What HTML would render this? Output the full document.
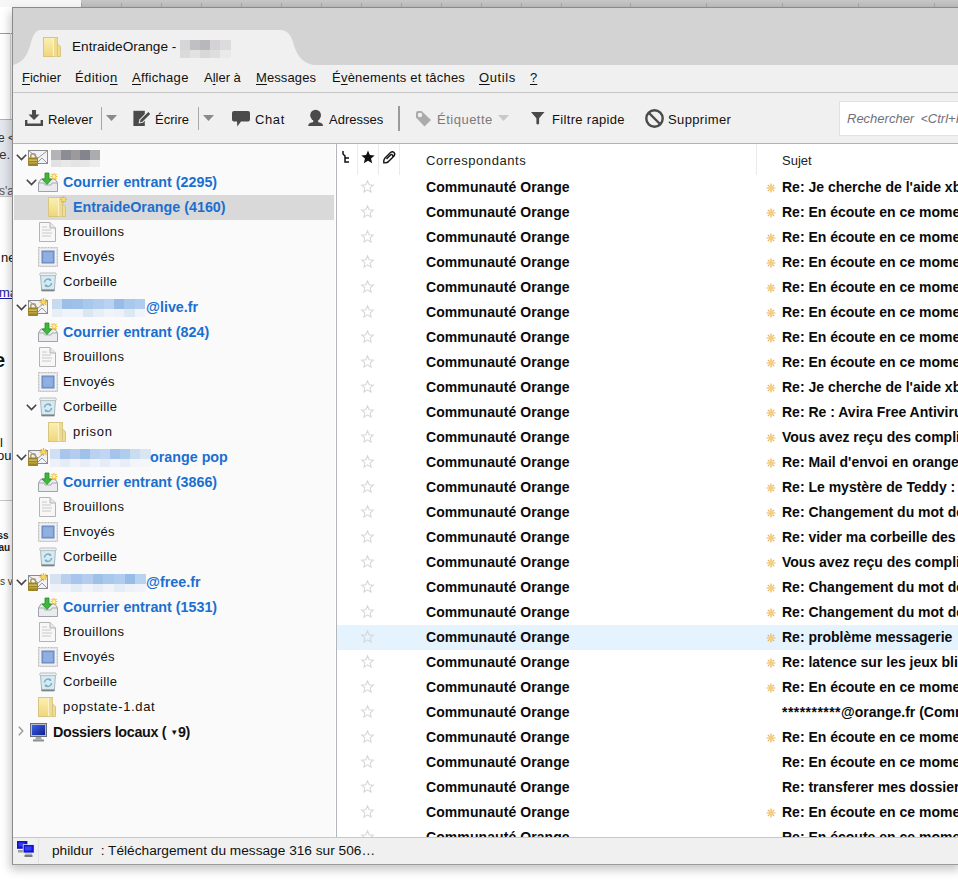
<!DOCTYPE html><html><head><meta charset="utf-8"><style>
*{margin:0;padding:0;box-sizing:border-box}
html,body{width:958px;height:883px;overflow:hidden;background:#fff;font-family:"Liberation Sans",sans-serif;color:#000}
.a{position:absolute;white-space:nowrap}
.r{position:absolute}
.t13{font-size:13px;line-height:16px}
.b14{font-size:14.3px;font-weight:bold;line-height:16px}
.u{text-decoration:underline;text-underline-offset:2px}
.blue{color:#1a6fd0}
svg{position:absolute;overflow:visible}
</style></head><body>
<div class="r" style="left:0;top:0;width:81px;height:7px;background:#f6f6f6"></div>
<div class="r" style="left:81px;top:0;width:877px;height:7px;background:linear-gradient(#c6c6c6,#bbbbbb)"></div>
<div class="r" style="left:81px;top:3px;width:1px;height:4px;background:#a4a4a4"></div>
<div class="r" style="left:121px;top:3px;width:1px;height:4px;background:#a4a4a4"></div>
<div class="r" style="left:161px;top:3px;width:1px;height:4px;background:#a4a4a4"></div>
<div class="r" style="left:201px;top:3px;width:1px;height:4px;background:#a4a4a4"></div>
<div class="r" style="left:241px;top:3px;width:1px;height:4px;background:#a4a4a4"></div>
<div class="r" style="left:281px;top:3px;width:1px;height:4px;background:#a4a4a4"></div>
<div class="r" style="left:321px;top:3px;width:1px;height:4px;background:#a4a4a4"></div>
<div class="r" style="left:361px;top:3px;width:1px;height:4px;background:#a4a4a4"></div>
<div class="r" style="left:401px;top:3px;width:1px;height:4px;background:#a4a4a4"></div>
<div class="r" style="left:441px;top:3px;width:1px;height:4px;background:#a4a4a4"></div>
<div class="r" style="left:481px;top:3px;width:1px;height:4px;background:#a4a4a4"></div>
<div class="r" style="left:521px;top:3px;width:1px;height:4px;background:#a4a4a4"></div>
<div class="r" style="left:561px;top:3px;width:1px;height:4px;background:#a4a4a4"></div>
<div class="r" style="left:630px;top:3px;width:1px;height:4px;background:#a4a4a4"></div>
<div class="r" style="left:706px;top:3px;width:1px;height:4px;background:#a4a4a4"></div>
<div class="r" style="left:782px;top:3px;width:1px;height:4px;background:#a4a4a4"></div>
<div class="r" style="left:858px;top:3px;width:1px;height:4px;background:#a4a4a4"></div>
<div class="r" style="left:934px;top:3px;width:1px;height:4px;background:#a4a4a4"></div>
<div class="r" style="left:0;top:33px;width:12px;height:1px;background:#9a9a9a"></div>
<div class="r" style="left:10px;top:33px;width:1px;height:87px;background:#d8d8d8"></div>
<div class="r" style="left:0;top:119px;width:12px;height:1px;background:#b0b0b0"></div>
<div class="r" style="left:0;top:120px;width:12px;height:76px;background:#e4e8ee"></div>
<div class="r" style="left:0;top:500px;width:12px;height:1px;background:#c8c8c8"></div>
<div class="r" style="left:0;top:196px;width:12px;height:1px;background:#c4c4c4"></div>
<div class="a" style="left:-2px;top:131px;font-size:12px;line-height:14px;color:#333;font-weight:normal;">e &lt;</div>
<div class="a" style="left:-8px;top:147px;font-size:13px;line-height:15px;color:#333;font-weight:normal;">ge.</div>
<div class="a" style="left:-1px;top:184px;font-size:12px;line-height:14px;color:#555;font-weight:normal;">s'a</div>
<div class="a" style="left:1px;top:250px;font-size:13px;line-height:15px;color:#111;font-weight:normal;">ne</div>
<div class="a" style="left:-1px;top:285px;font-size:13px;line-height:15px;color:#1a1aa0;font-weight:normal;text-decoration:underline;">ma</div>
<div class="a" style="left:-6px;top:349px;font-size:20px;line-height:22px;color:#111;font-weight:bold;">e</div>
<div class="a" style="left:-10px;top:435px;font-size:13px;line-height:15px;color:#111;font-weight:normal;">ail</div>
<div class="a" style="left:-3px;top:448px;font-size:13px;line-height:15px;color:#111;font-weight:normal;">ou</div>
<div class="a" style="left:-8px;top:530px;font-size:10px;line-height:12px;color:#222;font-weight:bold;">ess</div>
<div class="a" style="left:-7px;top:542px;font-size:10px;line-height:12px;color:#222;font-weight:bold;">eau</div>
<div class="a" style="left:0px;top:576px;font-size:10px;line-height:12px;color:#333;font-weight:normal;">s v</div>
<div class="r" style="left:12px;top:7px;width:950px;height:858px;background:#d3d3d3;border-left:1px solid #8a8a8a;border-top:1px solid #8a8a8a;border-bottom:1px solid #9a9a9a;box-shadow:-2px 5px 9px rgba(0,0,0,0.22)"></div>
<svg style="left:0;top:0" width="330" height="70"><path d="M13 65 C22 63 27 56 30 46 C33 35 35 30 41 30 L280 30 C288 30 291 36 293 42 C296 52 300 63 314 65 Z" fill="#f0f0f0"/></svg>
<div class="r" style="left:13px;top:65px;width:945px;height:27px;background:#f0f0f0"></div>
<div class="r" style="left:13px;top:92px;width:945px;height:1px;background:#c6c6c6"></div>
<div class="r" style="left:13px;top:93px;width:945px;height:50px;background:#f0f0f0"></div>
<div class="r" style="left:13px;top:143px;width:945px;height:1px;background:#b4b4b4"></div>
<div class="r" style="left:13px;top:144px;width:322px;height:693px;background:#fafafa"></div>
<div class="r" style="left:335px;top:144px;width:1px;height:693px;background:#fff"></div>
<div class="r" style="left:336px;top:144px;width:1px;height:693px;background:#b3b7bb"></div>
<div class="r" style="left:337px;top:144px;width:621px;height:693px;background:#fff"></div>
<div class="r" style="left:13px;top:837px;width:945px;height:1px;background:#c8c8c8"></div>
<div class="r" style="left:13px;top:838px;width:945px;height:26px;background:#f0f0f0"></div>
<div class="r" style="left:38px;top:838px;width:1px;height:26px;background:#e2e2e2"></div>
<svg style="left:43px;top:37px" width="19" height="20" viewBox="0 0 19 20">
<defs><linearGradient id="fg43_37" x1="0" y1="0" x2="0" y2="1"><stop offset="0" stop-color="#faf0b4"/><stop offset="1" stop-color="#f0d67a"/></linearGradient></defs>
<rect x="0.5" y="0.5" width="14" height="19" fill="url(#fg43_37)" stroke="#d6c682"/>
<rect x="10.6" y="1" width="3.6" height="18.4" fill="#eedb8e"/>
<path d="M10.4 1 V19" stroke="#fffbe0" stroke-width="0.8"/>
<path d="M14.5 7 L17.5 9.5 V19.5 H14.5 Z" fill="#f2dd8a" stroke="#d6c682"/>
</svg>
<div class="a" style="left:72px;top:39px;font-size:13.6px;line-height:16px;color:#111">EntraideOrange -</div>
<div class="r" style="left:180.0px;top:40px;width:10.5px;height:10px;background:#d6d6d8"></div><div class="r" style="left:190.0px;top:40px;width:10.5px;height:10px;background:#c0bfc4"></div><div class="r" style="left:200.0px;top:40px;width:10.5px;height:10px;background:#b9b7ba"></div><div class="r" style="left:210.0px;top:40px;width:10.5px;height:10px;background:#d4d2d6"></div><div class="r" style="left:220.0px;top:40px;width:10.5px;height:10px;background:#dcdcde"></div>
<div class="r" style="left:180.0px;top:50px;width:10.5px;height:8px;background:#dadada"></div><div class="r" style="left:190.0px;top:50px;width:10.5px;height:8px;background:#e2e2e2"></div><div class="r" style="left:200.0px;top:50px;width:10.5px;height:8px;background:#d8d8d8"></div><div class="r" style="left:210.0px;top:50px;width:10.5px;height:8px;background:#dedede"></div><div class="r" style="left:220.0px;top:50px;width:10.5px;height:8px;background:#eaeaea"></div>
<div class="a t13" style="left:22px;top:70px;color:#111;letter-spacing:0px"><span class="u">F</span>ichier</div>
<div class="a t13" style="left:75px;top:70px;color:#111;letter-spacing:0.4px">Éditio<span class="u">n</span></div>
<div class="a t13" style="left:132px;top:70px;color:#111;letter-spacing:0.3px"><span class="u">A</span>ffichage</div>
<div class="a t13" style="left:204px;top:70px;color:#111;letter-spacing:0px">A<span class="u">l</span>ler à</div>
<div class="a t13" style="left:256px;top:70px;color:#111;letter-spacing:0.1px"><span class="u">M</span>essages</div>
<div class="a t13" style="left:332px;top:70px;color:#111;letter-spacing:0.22px">É<span class="u">v</span>ènements et tâches</div>
<div class="a t13" style="left:479px;top:70px;color:#111;letter-spacing:0.6px"><span class="u">O</span>utils</div>
<div class="a t13" style="left:530px;top:70px;color:#111;letter-spacing:0px"><span class="u">?</span></div>
<div class="a t13" style="left:48px;top:112px;color:#111;letter-spacing:0px">Relever</div>
<div class="a t13" style="left:155px;top:112px;color:#111;letter-spacing:0px">Écrire</div>
<div class="a t13" style="left:255px;top:112px;color:#111;letter-spacing:0.6px">Chat</div>
<div class="a t13" style="left:329px;top:112px;color:#111;letter-spacing:0px">Adresses</div>
<div class="a t13" style="left:437px;top:112px;color:#7a7a7a;letter-spacing:0.5px">Étiquette</div>
<div class="a t13" style="left:552px;top:112px;color:#111;letter-spacing:0.33px">Filtre rapide</div>
<div class="a t13" style="left:668px;top:112px;color:#111;letter-spacing:0.37px">Supprimer</div>
<svg style="left:25px;top:110px" width="18" height="16" viewBox="0 0 18 16"><path d="M7 0 H11 V4.5 H14.5 L9 10 L3.5 4.5 H7 Z" fill="#4a4a4a"/><path d="M1.2 10 V14.8 H16.8 V10" fill="none" stroke="#4a4a4a" stroke-width="2.4"/></svg>
<svg style="left:133px;top:110px" width="19" height="17" viewBox="0 0 19 17"><rect x="0.4" y="0.8" width="11.4" height="15.2" fill="#4a4a4a"/><path d="M5.6 13.6 L6.4 9.4 L15.3 0.5 L18.7 3.9 L9.8 12.8 Z" fill="#f0f0f0"/><path d="M6.8 12.4 L7.5 9.8 L15.3 2 L17.2 3.9 L9.4 11.7 Z" fill="#4a4a4a"/></svg>
<svg style="left:232px;top:111px" width="18" height="16" viewBox="0 0 18 16"><path d="M2 0 H16 Q18 0 18 2 V8.5 Q18 10.5 16 10.5 H9 L5.3 15.5 L5 10.5 H2 Q0 10.5 0 8.5 V2 Q0 0 2 0 Z" fill="#4a4a4a"/></svg>
<svg style="left:307px;top:109px" width="17" height="18" viewBox="0 0 17 18"><ellipse cx="8.6" cy="6.3" rx="5.4" ry="5.6" fill="#4a4a4a"/><rect x="6.2" y="10.5" width="5" height="3.5" fill="#4a4a4a"/><path d="M1.2 17 Q1.2 13.6 5.5 13.2 H11.7 Q16 13.6 16 17 Z" fill="#4a4a4a"/></svg>
<svg style="left:415px;top:110px" width="17" height="16" viewBox="0 0 17 16"><path d="M1 3 Q1 1 3 1 H6.5 L16 10 L9.5 16.5 L1 7.5 Z" fill="#ababab"/><circle cx="5" cy="5" r="2.2" fill="#f0f0f0"/></svg>
<svg style="left:531px;top:112px" width="14" height="13" viewBox="0 0 14 13"><path d="M0 0 H13.5 L8.1 6.2 V11.8 Q6.75 13.2 5.4 11.8 V6.2 Z" fill="#4a4a4a"/></svg>
<svg style="left:645px;top:109px" width="19" height="19" viewBox="0 0 19 19"><circle cx="9.5" cy="9.5" r="8.2" fill="none" stroke="#4a4a4a" stroke-width="2.4"/><path d="M4 4 L15 15" stroke="#4a4a4a" stroke-width="2.4"/></svg>
<div class="r" style="left:101px;top:107px;width:1px;height:23px;background:#a8a8a8"></div>
<div class="r" style="left:198px;top:107px;width:1px;height:23px;background:#a8a8a8"></div>
<div class="r" style="left:398px;top:106px;width:2px;height:25px;background:#9a9a9a"></div>
<svg style="left:106px;top:115px" width="11" height="6" viewBox="0 0 11 6"><path d="M0 0 H11 L5.5 6 Z" fill="#8a8a8a"/></svg>
<svg style="left:203px;top:115px" width="11" height="6" viewBox="0 0 11 6"><path d="M0 0 H11 L5.5 6 Z" fill="#8a8a8a"/></svg>
<svg style="left:498px;top:115px" width="11" height="6" viewBox="0 0 11 6"><path d="M0 0 H11 L5.5 6 Z" fill="#c8c8c8"/></svg>
<div class="r" style="left:839px;top:101px;width:130px;height:35px;background:#fff;border:1px solid #e2e2e2"></div>
<div class="a" style="left:847px;top:111px;font-size:13px;line-height:16px;font-style:italic;color:#70707c">Rechercher <span style="margin-left:3px;font-size:12px">&lt;</span>Ctrl+K&gt;</div>
<div class="r" style="left:14px;top:195px;width:320px;height:25px;background:#d9d9d9"></div>
<svg style="left:16px;top:154px" width="11" height="7" viewBox="0 0 11 7"><path d="M0.8 0.8 L5.5 5.6 L10.2 0.8" fill="none" stroke="#444" stroke-width="1.6"/></svg>
<svg style="left:28px;top:150px" width="20" height="17" viewBox="0 0 20 17">
<rect x="0.5" y="0.5" width="19" height="13" fill="#f2f2f4" stroke="#8c8c90"/>
<path d="M1 1 L10 8 L19 1" fill="none" stroke="#9a9aa0"/>
<path d="M9 13 L14 8 L19 13" fill="none" stroke="#9a9aa0"/>
<path d="M2.8 8 v-2 a2.4 2.4 0 0 1 4.8 0 V8" fill="none" stroke="#a89a60" stroke-width="1.4"/>
<rect x="0" y="7.5" width="10" height="8.5" rx="0.8" fill="#9c8424"/>
<rect x="1" y="9.5" width="8" height="1.3" fill="#d8c66a"/>
<rect x="1" y="12.3" width="8" height="1.1" fill="#c8b450"/>
</svg>
<div class="r" style="left:51.0px;top:150px;width:10.3px;height:10px;background:#b4b4b8"></div><div class="r" style="left:60.8px;top:150px;width:10.3px;height:10px;background:#8c8c94"></div><div class="r" style="left:70.6px;top:150px;width:10.3px;height:10px;background:#9c9a9c"></div><div class="r" style="left:80.4px;top:150px;width:10.3px;height:10px;background:#84848c"></div><div class="r" style="left:90.2px;top:150px;width:10.3px;height:10px;background:#acacb0"></div>
<div class="r" style="left:51.0px;top:160px;width:10.3px;height:7px;background:#e2e2e2"></div><div class="r" style="left:60.8px;top:160px;width:10.3px;height:7px;background:#e8e8e8"></div><div class="r" style="left:70.6px;top:160px;width:10.3px;height:7px;background:#e4e4e4"></div><div class="r" style="left:80.4px;top:160px;width:10.3px;height:7px;background:#e6e6e6"></div><div class="r" style="left:90.2px;top:160px;width:10.3px;height:7px;background:#ececec"></div>
<svg style="left:26px;top:179px" width="11" height="7" viewBox="0 0 11 7"><path d="M0.8 0.8 L5.5 5.6 L10.2 0.8" fill="none" stroke="#444" stroke-width="1.6"/></svg>
<svg style="left:38px;top:172px" width="21" height="20" viewBox="0 0 21 20">
<path d="M0.5 11 L3 7 H17 L19.5 11 V19.5 H0.5 Z" fill="#e9ebef" stroke="#9ea3aa"/>
<path d="M0.5 11 H6 L7 13 H13 L14 11 H19.5" fill="none" stroke="#a8adb4"/>
<path d="M7 1 H11 V7 H14 L9 12.5 L4 7 H7 Z" fill="#3db83a" stroke="#2a8a2a" stroke-width="0.8"/>
<g stroke="#f0c040" stroke-width="1.2"><path d="M16 1 V8 M12.5 4.5 H19.5 M13.5 2 L18.5 7 M18.5 2 L13.5 7"/></g>
<circle cx="16" cy="4.5" r="1.5" fill="#fff6b0"/>
</svg>
<div class="a b14 blue" style="left:63px;top:174px">Courrier entrant (2295)</div>
<svg style="left:48px;top:197px" width="19" height="20" viewBox="0 0 19 20">
<defs><linearGradient id="fg48_197" x1="0" y1="0" x2="0" y2="1"><stop offset="0" stop-color="#faf0b4"/><stop offset="1" stop-color="#f0d67a"/></linearGradient></defs>
<rect x="0.5" y="0.5" width="14" height="19" fill="url(#fg48_197)" stroke="#d6c682"/>
<rect x="10.6" y="1" width="3.6" height="18.4" fill="#eedb8e"/>
<path d="M10.4 1 V19" stroke="#fffbe0" stroke-width="0.8"/>
<path d="M14.5 7 L17.5 9.5 V19.5 H14.5 Z" fill="#f2dd8a" stroke="#d6c682"/>
<g stroke="#e8b830" stroke-width="1.2"><path d="M15.5 -1 V6 M12 2.5 H19 M13 0 L18 5 M18 0 L13 5"/></g><circle cx="15.5" cy="2.5" r="1.7" fill="#f8dc70"/></svg>
<div class="a b14 blue" style="left:73px;top:199px">EntraideOrange (4160)</div>
<svg style="left:39px;top:222px" width="17" height="20" viewBox="0 0 17 20">
<path d="M0.5 0.5 H11 L16.5 6 V19.5 H0.5 Z" fill="#f7f7f7" stroke="#b4b4b4"/>
<path d="M11 0.5 V6 H16.5" fill="#e6e6e6" stroke="#b4b4b4"/>
<path d="M3 5 H8 M3 8 H12 M3 11 H13 M3 14 H12" stroke="#c8c8c8"/>
</svg>
<div class="a t13" style="left:63px;top:224px;color:#111;letter-spacing:0.44px">Brouillons</div>
<svg style="left:38px;top:247px" width="20" height="20" viewBox="0 0 20 20">
<rect x="0.5" y="0.5" width="19" height="19" fill="#e4e4e6" stroke="#bdbdc0" stroke-width="1" stroke-dasharray="2 1"/>
<rect x="2" y="2" width="16" height="16" fill="#f2f2f4"/>
<rect x="4" y="4" width="12" height="12" fill="#84a4d8" stroke="#5f82c0"/>
<rect x="5.5" y="5.5" width="9" height="9" fill="#90b0e0"/>
</svg>
<div class="a t13" style="left:63px;top:249px;color:#111;letter-spacing:0.27px">Envoyés</div>
<svg style="left:39px;top:272px" width="18" height="20" viewBox="0 0 18 20">
<path d="M1.5 2.5 H16.5 L15.3 18.8 H2.7 Z" fill="#d6eaf2" stroke="#a6b6be"/>
<rect x="0.8" y="1" width="16.4" height="2.6" rx="0.8" fill="#eef2f4" stroke="#b4bcc0"/>
<rect x="2.6" y="17.4" width="12.8" height="1.8" fill="#7c8286"/>
<path d="M5.5 10.5 a3.4 3.4 0 0 1 5.8 -2.4 M12.5 11 a3.4 3.4 0 0 1 -5.8 2.4" fill="none" stroke="#7aaac4" stroke-width="1.5"/>
<path d="M11.8 6.4 L12.4 9 L9.8 8.6 Z M6.2 15 L5.6 12.4 L8.2 12.8 Z" fill="#7aaac4"/>
</svg>
<div class="a t13" style="left:63px;top:274px;color:#111;letter-spacing:0.34px">Corbeille</div>
<svg style="left:16px;top:304px" width="11" height="7" viewBox="0 0 11 7"><path d="M0.8 0.8 L5.5 5.6 L10.2 0.8" fill="none" stroke="#444" stroke-width="1.6"/></svg>
<svg style="left:28px;top:300px" width="20" height="17" viewBox="0 0 20 17">
<rect x="0.5" y="0.5" width="19" height="13" fill="#f2f2f4" stroke="#8c8c90"/>
<path d="M1 1 L10 8 L19 1" fill="none" stroke="#9a9aa0"/>
<path d="M9 13 L14 8 L19 13" fill="none" stroke="#9a9aa0"/>
<path d="M2.8 8 v-2 a2.4 2.4 0 0 1 4.8 0 V8" fill="none" stroke="#a89a60" stroke-width="1.4"/>
<rect x="0" y="7.5" width="10" height="8.5" rx="0.8" fill="#9c8424"/>
<rect x="1" y="9.5" width="8" height="1.3" fill="#d8c66a"/>
<rect x="1" y="12.3" width="8" height="1.1" fill="#c8b450"/>
<g stroke="#e8b830" stroke-width="1.3"><path d="M15.5 -2 V6 M11.5 2 H19.5 M12.7 -0.8 L18.3 4.8 M18.3 -0.8 L12.7 4.8"/></g><circle cx="15.5" cy="2" r="2" fill="#f6d860"/></svg>
<div class="r" style="left:52.0px;top:299px;width:10.8px;height:10px;background:#c8daf0"></div><div class="r" style="left:62.3px;top:299px;width:10.8px;height:10px;background:#9cbfe8"></div><div class="r" style="left:72.7px;top:299px;width:10.8px;height:10px;background:#9fc1e9"></div><div class="r" style="left:83.0px;top:299px;width:10.8px;height:10px;background:#a8c8ec"></div><div class="r" style="left:93.3px;top:299px;width:10.8px;height:10px;background:#b0cdef"></div><div class="r" style="left:103.7px;top:299px;width:10.8px;height:10px;background:#b8d2f0"></div><div class="r" style="left:114.0px;top:299px;width:10.8px;height:10px;background:#98bce8"></div><div class="r" style="left:124.3px;top:299px;width:10.8px;height:10px;background:#a8c8ec"></div><div class="r" style="left:134.7px;top:299px;width:10.8px;height:10px;background:#b0cdef"></div>
<div class="r" style="left:52.0px;top:309px;width:10.8px;height:8px;background:#e8eef6"></div><div class="r" style="left:62.3px;top:309px;width:10.8px;height:8px;background:#f0f4fa"></div><div class="r" style="left:72.7px;top:309px;width:10.8px;height:8px;background:#f0f4fa"></div><div class="r" style="left:83.0px;top:309px;width:10.8px;height:8px;background:#dce6f2"></div><div class="r" style="left:93.3px;top:309px;width:10.8px;height:8px;background:#e8eef6"></div><div class="r" style="left:103.7px;top:309px;width:10.8px;height:8px;background:#f0f4fa"></div><div class="r" style="left:114.0px;top:309px;width:10.8px;height:8px;background:#eef2f8"></div><div class="r" style="left:124.3px;top:309px;width:10.8px;height:8px;background:#dce8f4"></div><div class="r" style="left:134.7px;top:309px;width:10.8px;height:8px;background:#f0f4fa"></div>
<div class="a b14 blue" style="left:146px;top:299px">@live.fr</div>
<svg style="left:38px;top:322px" width="21" height="20" viewBox="0 0 21 20">
<path d="M0.5 11 L3 7 H17 L19.5 11 V19.5 H0.5 Z" fill="#e9ebef" stroke="#9ea3aa"/>
<path d="M0.5 11 H6 L7 13 H13 L14 11 H19.5" fill="none" stroke="#a8adb4"/>
<path d="M7 1 H11 V7 H14 L9 12.5 L4 7 H7 Z" fill="#3db83a" stroke="#2a8a2a" stroke-width="0.8"/>
<g stroke="#f0c040" stroke-width="1.2"><path d="M16 1 V8 M12.5 4.5 H19.5 M13.5 2 L18.5 7 M18.5 2 L13.5 7"/></g>
<circle cx="16" cy="4.5" r="1.5" fill="#fff6b0"/>
</svg>
<div class="a b14 blue" style="left:63px;top:324px">Courrier entrant (824)</div>
<svg style="left:39px;top:347px" width="17" height="20" viewBox="0 0 17 20">
<path d="M0.5 0.5 H11 L16.5 6 V19.5 H0.5 Z" fill="#f7f7f7" stroke="#b4b4b4"/>
<path d="M11 0.5 V6 H16.5" fill="#e6e6e6" stroke="#b4b4b4"/>
<path d="M3 5 H8 M3 8 H12 M3 11 H13 M3 14 H12" stroke="#c8c8c8"/>
</svg>
<div class="a t13" style="left:63px;top:349px;color:#111;letter-spacing:0.44px">Brouillons</div>
<svg style="left:38px;top:372px" width="20" height="20" viewBox="0 0 20 20">
<rect x="0.5" y="0.5" width="19" height="19" fill="#e4e4e6" stroke="#bdbdc0" stroke-width="1" stroke-dasharray="2 1"/>
<rect x="2" y="2" width="16" height="16" fill="#f2f2f4"/>
<rect x="4" y="4" width="12" height="12" fill="#84a4d8" stroke="#5f82c0"/>
<rect x="5.5" y="5.5" width="9" height="9" fill="#90b0e0"/>
</svg>
<div class="a t13" style="left:63px;top:374px;color:#111;letter-spacing:0.27px">Envoyés</div>
<svg style="left:26px;top:404px" width="11" height="7" viewBox="0 0 11 7"><path d="M0.8 0.8 L5.5 5.6 L10.2 0.8" fill="none" stroke="#444" stroke-width="1.6"/></svg>
<svg style="left:39px;top:397px" width="18" height="20" viewBox="0 0 18 20">
<path d="M1.5 2.5 H16.5 L15.3 18.8 H2.7 Z" fill="#d6eaf2" stroke="#a6b6be"/>
<rect x="0.8" y="1" width="16.4" height="2.6" rx="0.8" fill="#eef2f4" stroke="#b4bcc0"/>
<rect x="2.6" y="17.4" width="12.8" height="1.8" fill="#7c8286"/>
<path d="M5.5 10.5 a3.4 3.4 0 0 1 5.8 -2.4 M12.5 11 a3.4 3.4 0 0 1 -5.8 2.4" fill="none" stroke="#7aaac4" stroke-width="1.5"/>
<path d="M11.8 6.4 L12.4 9 L9.8 8.6 Z M6.2 15 L5.6 12.4 L8.2 12.8 Z" fill="#7aaac4"/>
</svg>
<div class="a t13" style="left:63px;top:399px;color:#111;letter-spacing:0.34px">Corbeille</div>
<svg style="left:48px;top:422px" width="19" height="20" viewBox="0 0 19 20">
<defs><linearGradient id="fg48_422" x1="0" y1="0" x2="0" y2="1"><stop offset="0" stop-color="#faf0b4"/><stop offset="1" stop-color="#f0d67a"/></linearGradient></defs>
<rect x="0.5" y="0.5" width="14" height="19" fill="url(#fg48_422)" stroke="#d6c682"/>
<rect x="10.6" y="1" width="3.6" height="18.4" fill="#eedb8e"/>
<path d="M10.4 1 V19" stroke="#fffbe0" stroke-width="0.8"/>
<path d="M14.5 7 L17.5 9.5 V19.5 H14.5 Z" fill="#f2dd8a" stroke="#d6c682"/>
</svg>
<div class="a t13" style="left:73px;top:424px;color:#111;letter-spacing:0.7px">prison</div>
<svg style="left:16px;top:454px" width="11" height="7" viewBox="0 0 11 7"><path d="M0.8 0.8 L5.5 5.6 L10.2 0.8" fill="none" stroke="#444" stroke-width="1.6"/></svg>
<svg style="left:28px;top:450px" width="20" height="17" viewBox="0 0 20 17">
<rect x="0.5" y="0.5" width="19" height="13" fill="#f2f2f4" stroke="#8c8c90"/>
<path d="M1 1 L10 8 L19 1" fill="none" stroke="#9a9aa0"/>
<path d="M9 13 L14 8 L19 13" fill="none" stroke="#9a9aa0"/>
<path d="M2.8 8 v-2 a2.4 2.4 0 0 1 4.8 0 V8" fill="none" stroke="#a89a60" stroke-width="1.4"/>
<rect x="0" y="7.5" width="10" height="8.5" rx="0.8" fill="#9c8424"/>
<rect x="1" y="9.5" width="8" height="1.3" fill="#d8c66a"/>
<rect x="1" y="12.3" width="8" height="1.1" fill="#c8b450"/>
<g stroke="#e8b830" stroke-width="1.3"><path d="M15.5 -2 V6 M11.5 2 H19.5 M12.7 -0.8 L18.3 4.8 M18.3 -0.8 L12.7 4.8"/></g><circle cx="15.5" cy="2" r="2" fill="#f6d860"/></svg>
<div class="r" style="left:50.0px;top:449px;width:10.5px;height:10px;background:#d0e0f2"></div><div class="r" style="left:60.0px;top:449px;width:10.5px;height:10px;background:#a8c6ec"></div><div class="r" style="left:70.0px;top:449px;width:10.5px;height:10px;background:#b4cdef"></div><div class="r" style="left:80.0px;top:449px;width:10.5px;height:10px;background:#a0c2ea"></div><div class="r" style="left:90.0px;top:449px;width:10.5px;height:10px;background:#b8d2f0"></div><div class="r" style="left:100.0px;top:449px;width:10.5px;height:10px;background:#c0d6f2"></div><div class="r" style="left:110.0px;top:449px;width:10.5px;height:10px;background:#a4c4eb"></div><div class="r" style="left:120.0px;top:449px;width:10.5px;height:10px;background:#b0cdef"></div><div class="r" style="left:130.0px;top:449px;width:10.5px;height:10px;background:#c8dcf2"></div><div class="r" style="left:140.0px;top:449px;width:10.5px;height:10px;background:#d8e6f4"></div>
<div class="r" style="left:50.0px;top:459px;width:10.5px;height:8px;background:#eef2f8"></div><div class="r" style="left:60.0px;top:459px;width:10.5px;height:8px;background:#e4ecf6"></div><div class="r" style="left:70.0px;top:459px;width:10.5px;height:8px;background:#f0f4fa"></div><div class="r" style="left:80.0px;top:459px;width:10.5px;height:8px;background:#e8eef6"></div><div class="r" style="left:90.0px;top:459px;width:10.5px;height:8px;background:#f0f4fa"></div><div class="r" style="left:100.0px;top:459px;width:10.5px;height:8px;background:#e4ecf6"></div><div class="r" style="left:110.0px;top:459px;width:10.5px;height:8px;background:#f0f4fa"></div><div class="r" style="left:120.0px;top:459px;width:10.5px;height:8px;background:#e8eef6"></div><div class="r" style="left:130.0px;top:459px;width:10.5px;height:8px;background:#f2f6fa"></div><div class="r" style="left:140.0px;top:459px;width:10.5px;height:8px;background:#f4f6fa"></div>
<div class="a b14 blue" style="left:150px;top:449px">orange pop</div>
<svg style="left:38px;top:472px" width="21" height="20" viewBox="0 0 21 20">
<path d="M0.5 11 L3 7 H17 L19.5 11 V19.5 H0.5 Z" fill="#e9ebef" stroke="#9ea3aa"/>
<path d="M0.5 11 H6 L7 13 H13 L14 11 H19.5" fill="none" stroke="#a8adb4"/>
<path d="M7 1 H11 V7 H14 L9 12.5 L4 7 H7 Z" fill="#3db83a" stroke="#2a8a2a" stroke-width="0.8"/>
<g stroke="#f0c040" stroke-width="1.2"><path d="M16 1 V8 M12.5 4.5 H19.5 M13.5 2 L18.5 7 M18.5 2 L13.5 7"/></g>
<circle cx="16" cy="4.5" r="1.5" fill="#fff6b0"/>
</svg>
<div class="a b14 blue" style="left:63px;top:474px">Courrier entrant (3866)</div>
<svg style="left:39px;top:497px" width="17" height="20" viewBox="0 0 17 20">
<path d="M0.5 0.5 H11 L16.5 6 V19.5 H0.5 Z" fill="#f7f7f7" stroke="#b4b4b4"/>
<path d="M11 0.5 V6 H16.5" fill="#e6e6e6" stroke="#b4b4b4"/>
<path d="M3 5 H8 M3 8 H12 M3 11 H13 M3 14 H12" stroke="#c8c8c8"/>
</svg>
<div class="a t13" style="left:63px;top:499px;color:#111;letter-spacing:0.44px">Brouillons</div>
<svg style="left:38px;top:522px" width="20" height="20" viewBox="0 0 20 20">
<rect x="0.5" y="0.5" width="19" height="19" fill="#e4e4e6" stroke="#bdbdc0" stroke-width="1" stroke-dasharray="2 1"/>
<rect x="2" y="2" width="16" height="16" fill="#f2f2f4"/>
<rect x="4" y="4" width="12" height="12" fill="#84a4d8" stroke="#5f82c0"/>
<rect x="5.5" y="5.5" width="9" height="9" fill="#90b0e0"/>
</svg>
<div class="a t13" style="left:63px;top:524px;color:#111;letter-spacing:0.27px">Envoyés</div>
<svg style="left:39px;top:547px" width="18" height="20" viewBox="0 0 18 20">
<path d="M1.5 2.5 H16.5 L15.3 18.8 H2.7 Z" fill="#d6eaf2" stroke="#a6b6be"/>
<rect x="0.8" y="1" width="16.4" height="2.6" rx="0.8" fill="#eef2f4" stroke="#b4bcc0"/>
<rect x="2.6" y="17.4" width="12.8" height="1.8" fill="#7c8286"/>
<path d="M5.5 10.5 a3.4 3.4 0 0 1 5.8 -2.4 M12.5 11 a3.4 3.4 0 0 1 -5.8 2.4" fill="none" stroke="#7aaac4" stroke-width="1.5"/>
<path d="M11.8 6.4 L12.4 9 L9.8 8.6 Z M6.2 15 L5.6 12.4 L8.2 12.8 Z" fill="#7aaac4"/>
</svg>
<div class="a t13" style="left:63px;top:549px;color:#111;letter-spacing:0.34px">Corbeille</div>
<svg style="left:16px;top:579px" width="11" height="7" viewBox="0 0 11 7"><path d="M0.8 0.8 L5.5 5.6 L10.2 0.8" fill="none" stroke="#444" stroke-width="1.6"/></svg>
<svg style="left:28px;top:575px" width="20" height="17" viewBox="0 0 20 17">
<rect x="0.5" y="0.5" width="19" height="13" fill="#f2f2f4" stroke="#8c8c90"/>
<path d="M1 1 L10 8 L19 1" fill="none" stroke="#9a9aa0"/>
<path d="M9 13 L14 8 L19 13" fill="none" stroke="#9a9aa0"/>
<path d="M2.8 8 v-2 a2.4 2.4 0 0 1 4.8 0 V8" fill="none" stroke="#a89a60" stroke-width="1.4"/>
<rect x="0" y="7.5" width="10" height="8.5" rx="0.8" fill="#9c8424"/>
<rect x="1" y="9.5" width="8" height="1.3" fill="#d8c66a"/>
<rect x="1" y="12.3" width="8" height="1.1" fill="#c8b450"/>
<g stroke="#e8b830" stroke-width="1.3"><path d="M15.5 -2 V6 M11.5 2 H19.5 M12.7 -0.8 L18.3 4.8 M18.3 -0.8 L12.7 4.8"/></g><circle cx="15.5" cy="2" r="2" fill="#f6d860"/></svg>
<div class="r" style="left:50.0px;top:574px;width:11.2px;height:10px;background:#d4e2f2"></div><div class="r" style="left:60.7px;top:574px;width:11.2px;height:10px;background:#b8d0ee"></div><div class="r" style="left:71.3px;top:574px;width:11.2px;height:10px;background:#a8c6ec"></div><div class="r" style="left:82.0px;top:574px;width:11.2px;height:10px;background:#b4cdef"></div><div class="r" style="left:92.7px;top:574px;width:11.2px;height:10px;background:#9ec0e9"></div><div class="r" style="left:103.3px;top:574px;width:11.2px;height:10px;background:#a8c8ec"></div><div class="r" style="left:114.0px;top:574px;width:11.2px;height:10px;background:#b0cdef"></div><div class="r" style="left:124.7px;top:574px;width:11.2px;height:10px;background:#98bce8"></div><div class="r" style="left:135.3px;top:574px;width:11.2px;height:10px;background:#b8d2f0"></div>
<div class="r" style="left:50.0px;top:584px;width:11.2px;height:8px;background:#eef2f8"></div><div class="r" style="left:60.7px;top:584px;width:11.2px;height:8px;background:#f0f4fa"></div><div class="r" style="left:71.3px;top:584px;width:11.2px;height:8px;background:#e4ecf6"></div><div class="r" style="left:82.0px;top:584px;width:11.2px;height:8px;background:#f0f4fa"></div><div class="r" style="left:92.7px;top:584px;width:11.2px;height:8px;background:#e8eef6"></div><div class="r" style="left:103.3px;top:584px;width:11.2px;height:8px;background:#f0f4fa"></div><div class="r" style="left:114.0px;top:584px;width:11.2px;height:8px;background:#e4ecf6"></div><div class="r" style="left:124.7px;top:584px;width:11.2px;height:8px;background:#eef2f8"></div><div class="r" style="left:135.3px;top:584px;width:11.2px;height:8px;background:#f0f4fa"></div>
<div class="a b14 blue" style="left:146px;top:574px">@free.fr</div>
<svg style="left:38px;top:597px" width="21" height="20" viewBox="0 0 21 20">
<path d="M0.5 11 L3 7 H17 L19.5 11 V19.5 H0.5 Z" fill="#e9ebef" stroke="#9ea3aa"/>
<path d="M0.5 11 H6 L7 13 H13 L14 11 H19.5" fill="none" stroke="#a8adb4"/>
<path d="M7 1 H11 V7 H14 L9 12.5 L4 7 H7 Z" fill="#3db83a" stroke="#2a8a2a" stroke-width="0.8"/>
<g stroke="#f0c040" stroke-width="1.2"><path d="M16 1 V8 M12.5 4.5 H19.5 M13.5 2 L18.5 7 M18.5 2 L13.5 7"/></g>
<circle cx="16" cy="4.5" r="1.5" fill="#fff6b0"/>
</svg>
<div class="a b14 blue" style="left:63px;top:599px">Courrier entrant (1531)</div>
<svg style="left:39px;top:622px" width="17" height="20" viewBox="0 0 17 20">
<path d="M0.5 0.5 H11 L16.5 6 V19.5 H0.5 Z" fill="#f7f7f7" stroke="#b4b4b4"/>
<path d="M11 0.5 V6 H16.5" fill="#e6e6e6" stroke="#b4b4b4"/>
<path d="M3 5 H8 M3 8 H12 M3 11 H13 M3 14 H12" stroke="#c8c8c8"/>
</svg>
<div class="a t13" style="left:63px;top:624px;color:#111;letter-spacing:0.44px">Brouillons</div>
<svg style="left:38px;top:647px" width="20" height="20" viewBox="0 0 20 20">
<rect x="0.5" y="0.5" width="19" height="19" fill="#e4e4e6" stroke="#bdbdc0" stroke-width="1" stroke-dasharray="2 1"/>
<rect x="2" y="2" width="16" height="16" fill="#f2f2f4"/>
<rect x="4" y="4" width="12" height="12" fill="#84a4d8" stroke="#5f82c0"/>
<rect x="5.5" y="5.5" width="9" height="9" fill="#90b0e0"/>
</svg>
<div class="a t13" style="left:63px;top:649px;color:#111;letter-spacing:0.27px">Envoyés</div>
<svg style="left:39px;top:672px" width="18" height="20" viewBox="0 0 18 20">
<path d="M1.5 2.5 H16.5 L15.3 18.8 H2.7 Z" fill="#d6eaf2" stroke="#a6b6be"/>
<rect x="0.8" y="1" width="16.4" height="2.6" rx="0.8" fill="#eef2f4" stroke="#b4bcc0"/>
<rect x="2.6" y="17.4" width="12.8" height="1.8" fill="#7c8286"/>
<path d="M5.5 10.5 a3.4 3.4 0 0 1 5.8 -2.4 M12.5 11 a3.4 3.4 0 0 1 -5.8 2.4" fill="none" stroke="#7aaac4" stroke-width="1.5"/>
<path d="M11.8 6.4 L12.4 9 L9.8 8.6 Z M6.2 15 L5.6 12.4 L8.2 12.8 Z" fill="#7aaac4"/>
</svg>
<div class="a t13" style="left:63px;top:674px;color:#111;letter-spacing:0.34px">Corbeille</div>
<svg style="left:38px;top:697px" width="19" height="20" viewBox="0 0 19 20">
<defs><linearGradient id="fg38_697" x1="0" y1="0" x2="0" y2="1"><stop offset="0" stop-color="#faf0b4"/><stop offset="1" stop-color="#f0d67a"/></linearGradient></defs>
<rect x="0.5" y="0.5" width="14" height="19" fill="url(#fg38_697)" stroke="#d6c682"/>
<rect x="10.6" y="1" width="3.6" height="18.4" fill="#eedb8e"/>
<path d="M10.4 1 V19" stroke="#fffbe0" stroke-width="0.8"/>
<path d="M14.5 7 L17.5 9.5 V19.5 H14.5 Z" fill="#f2dd8a" stroke="#d6c682"/>
</svg>
<div class="a t13" style="left:63px;top:699px;color:#111;letter-spacing:0.66px">popstate-1.dat</div>
<svg style="left:18px;top:726px" width="7" height="11" viewBox="0 0 7 11"><path d="M0.8 0.8 L4.8 5 L0.8 9.2" fill="none" stroke="#9a9a9a" stroke-width="1.4"/></svg>
<svg style="left:29px;top:723px" width="20" height="20" viewBox="0 0 20 20">
<rect x="1.5" y="0.5" width="16" height="13" fill="#b8bcc4" stroke="#6a6e78"/>
<defs><linearGradient id="scr" x1="0" y1="0" x2="1" y2="1"><stop offset="0" stop-color="#3a60f0"/><stop offset="1" stop-color="#10208a"/></linearGradient></defs>
<rect x="3" y="2" width="13" height="10" fill="url(#scr)"/>
<path d="M7 14 H12 L13 16.5 H6 Z" fill="#a8a8a8"/>
<rect x="4" y="16.5" width="11" height="2" fill="#909090"/>
</svg>
<div class="a b14" style="left:53px;top:724px;color:#111;letter-spacing:-0.3px">Dossiers locaux (<span style="font-size:8px;vertical-align:2px;margin:0 0 0 4px">▼</span>9)</div>
<div class="a t13" style="left:426px;top:153px;color:#222;letter-spacing:0.55px">Correspondants</div>
<div class="a t13" style="left:782px;top:153px;color:#222">Sujet</div>
<div class="r" style="left:357px;top:144px;width:1px;height:31px;background:#eaeaea"></div>
<div class="r" style="left:378px;top:144px;width:1px;height:31px;background:#eaeaea"></div>
<div class="r" style="left:399px;top:144px;width:1px;height:31px;background:#eaeaea"></div>
<div class="r" style="left:756px;top:144px;width:1px;height:31px;background:#eaeaea"></div>
<svg style="left:342px;top:151px" width="8" height="12" viewBox="0 0 8 12"><path d="M1 0 V3 L3 5 V11 H7 M3 7 H7" fill="none" stroke="#111" stroke-width="1.5"/></svg>
<svg style="left:361px;top:150px" width="14" height="14" viewBox="0 0 24 24"><path d="M12 1 L15.2 8.6 L23.4 9.3 L17.2 14.7 L19.1 22.8 L12 18.5 L4.9 22.8 L6.8 14.7 L0.6 9.3 L8.8 8.6 Z" fill="#111"/></svg>
<svg style="left:383px;top:151px" width="13" height="13" viewBox="0 0 13 13"><path d="M4.5 11.5 L11 5 Q12.5 3 11 1.5 Q9.5 0 7.5 1.5 L2 7 Q0.5 8.5 0.8 11.8 Q4 12.2 5.5 10.5 L9.5 6.5 Q10.5 5 9.5 4 Q8.5 3 7 4.5 L3.5 8" fill="none" stroke="#111" stroke-width="1.4"/></svg>
<div class="r" style="left:337px;top:175px;width:621px;height:662px;overflow:hidden">
<svg style="left:24px;top:5px" width="13" height="13" viewBox="0 0 24 24"><path d="M12 1.5 L15 8.8 L22.8 9.5 L16.9 14.6 L18.7 22.3 L12 18.3 L5.3 22.3 L7.1 14.6 L1.2 9.5 L9 8.8 Z" fill="none" stroke="#d6d6d6" stroke-width="1.9"/></svg>
<div class="a b14" style="left:89px;top:4px;color:#0a0a0a;font-size:14px;letter-spacing:0.08px">Communauté Orange</div>
<svg style="left:429px;top:8px" width="10" height="10" viewBox="0 0 10 10"><g stroke="#eab35a" stroke-width="1.2"><path d="M5 0.5 V9.5 M0.5 5 H9.5 M1.8 1.8 L8.2 8.2 M8.2 1.8 L1.8 8.2"/></g><circle cx="5" cy="5" r="2.4" fill="#f4cf7c"/></svg>
<div class="a b14" style="left:445px;top:4px;color:#0a0a0a;font-size:14px">Re: Je cherche de l'aide xbox</div>
<svg style="left:24px;top:30px" width="13" height="13" viewBox="0 0 24 24"><path d="M12 1.5 L15 8.8 L22.8 9.5 L16.9 14.6 L18.7 22.3 L12 18.3 L5.3 22.3 L7.1 14.6 L1.2 9.5 L9 8.8 Z" fill="none" stroke="#d6d6d6" stroke-width="1.9"/></svg>
<div class="a b14" style="left:89px;top:29px;color:#0a0a0a;font-size:14px;letter-spacing:0.08px">Communauté Orange</div>
<svg style="left:429px;top:33px" width="10" height="10" viewBox="0 0 10 10"><g stroke="#eab35a" stroke-width="1.2"><path d="M5 0.5 V9.5 M0.5 5 H9.5 M1.8 1.8 L8.2 8.2 M8.2 1.8 L1.8 8.2"/></g><circle cx="5" cy="5" r="2.4" fill="#f4cf7c"/></svg>
<div class="a b14" style="left:445px;top:29px;color:#0a0a0a;font-size:14px">Re: En écoute en ce moment</div>
<svg style="left:24px;top:55px" width="13" height="13" viewBox="0 0 24 24"><path d="M12 1.5 L15 8.8 L22.8 9.5 L16.9 14.6 L18.7 22.3 L12 18.3 L5.3 22.3 L7.1 14.6 L1.2 9.5 L9 8.8 Z" fill="none" stroke="#d6d6d6" stroke-width="1.9"/></svg>
<div class="a b14" style="left:89px;top:54px;color:#0a0a0a;font-size:14px;letter-spacing:0.08px">Communauté Orange</div>
<svg style="left:429px;top:58px" width="10" height="10" viewBox="0 0 10 10"><g stroke="#eab35a" stroke-width="1.2"><path d="M5 0.5 V9.5 M0.5 5 H9.5 M1.8 1.8 L8.2 8.2 M8.2 1.8 L1.8 8.2"/></g><circle cx="5" cy="5" r="2.4" fill="#f4cf7c"/></svg>
<div class="a b14" style="left:445px;top:54px;color:#0a0a0a;font-size:14px">Re: En écoute en ce moment</div>
<svg style="left:24px;top:80px" width="13" height="13" viewBox="0 0 24 24"><path d="M12 1.5 L15 8.8 L22.8 9.5 L16.9 14.6 L18.7 22.3 L12 18.3 L5.3 22.3 L7.1 14.6 L1.2 9.5 L9 8.8 Z" fill="none" stroke="#d6d6d6" stroke-width="1.9"/></svg>
<div class="a b14" style="left:89px;top:79px;color:#0a0a0a;font-size:14px;letter-spacing:0.08px">Communauté Orange</div>
<svg style="left:429px;top:83px" width="10" height="10" viewBox="0 0 10 10"><g stroke="#eab35a" stroke-width="1.2"><path d="M5 0.5 V9.5 M0.5 5 H9.5 M1.8 1.8 L8.2 8.2 M8.2 1.8 L1.8 8.2"/></g><circle cx="5" cy="5" r="2.4" fill="#f4cf7c"/></svg>
<div class="a b14" style="left:445px;top:79px;color:#0a0a0a;font-size:14px">Re: En écoute en ce moment</div>
<svg style="left:24px;top:105px" width="13" height="13" viewBox="0 0 24 24"><path d="M12 1.5 L15 8.8 L22.8 9.5 L16.9 14.6 L18.7 22.3 L12 18.3 L5.3 22.3 L7.1 14.6 L1.2 9.5 L9 8.8 Z" fill="none" stroke="#d6d6d6" stroke-width="1.9"/></svg>
<div class="a b14" style="left:89px;top:104px;color:#0a0a0a;font-size:14px;letter-spacing:0.08px">Communauté Orange</div>
<svg style="left:429px;top:108px" width="10" height="10" viewBox="0 0 10 10"><g stroke="#eab35a" stroke-width="1.2"><path d="M5 0.5 V9.5 M0.5 5 H9.5 M1.8 1.8 L8.2 8.2 M8.2 1.8 L1.8 8.2"/></g><circle cx="5" cy="5" r="2.4" fill="#f4cf7c"/></svg>
<div class="a b14" style="left:445px;top:104px;color:#0a0a0a;font-size:14px">Re: En écoute en ce moment</div>
<svg style="left:24px;top:130px" width="13" height="13" viewBox="0 0 24 24"><path d="M12 1.5 L15 8.8 L22.8 9.5 L16.9 14.6 L18.7 22.3 L12 18.3 L5.3 22.3 L7.1 14.6 L1.2 9.5 L9 8.8 Z" fill="none" stroke="#d6d6d6" stroke-width="1.9"/></svg>
<div class="a b14" style="left:89px;top:129px;color:#0a0a0a;font-size:14px;letter-spacing:0.08px">Communauté Orange</div>
<svg style="left:429px;top:133px" width="10" height="10" viewBox="0 0 10 10"><g stroke="#eab35a" stroke-width="1.2"><path d="M5 0.5 V9.5 M0.5 5 H9.5 M1.8 1.8 L8.2 8.2 M8.2 1.8 L1.8 8.2"/></g><circle cx="5" cy="5" r="2.4" fill="#f4cf7c"/></svg>
<div class="a b14" style="left:445px;top:129px;color:#0a0a0a;font-size:14px">Re: En écoute en ce moment</div>
<svg style="left:24px;top:155px" width="13" height="13" viewBox="0 0 24 24"><path d="M12 1.5 L15 8.8 L22.8 9.5 L16.9 14.6 L18.7 22.3 L12 18.3 L5.3 22.3 L7.1 14.6 L1.2 9.5 L9 8.8 Z" fill="none" stroke="#d6d6d6" stroke-width="1.9"/></svg>
<div class="a b14" style="left:89px;top:154px;color:#0a0a0a;font-size:14px;letter-spacing:0.08px">Communauté Orange</div>
<svg style="left:429px;top:158px" width="10" height="10" viewBox="0 0 10 10"><g stroke="#eab35a" stroke-width="1.2"><path d="M5 0.5 V9.5 M0.5 5 H9.5 M1.8 1.8 L8.2 8.2 M8.2 1.8 L1.8 8.2"/></g><circle cx="5" cy="5" r="2.4" fill="#f4cf7c"/></svg>
<div class="a b14" style="left:445px;top:154px;color:#0a0a0a;font-size:14px">Re: En écoute en ce moment</div>
<svg style="left:24px;top:180px" width="13" height="13" viewBox="0 0 24 24"><path d="M12 1.5 L15 8.8 L22.8 9.5 L16.9 14.6 L18.7 22.3 L12 18.3 L5.3 22.3 L7.1 14.6 L1.2 9.5 L9 8.8 Z" fill="none" stroke="#d6d6d6" stroke-width="1.9"/></svg>
<div class="a b14" style="left:89px;top:179px;color:#0a0a0a;font-size:14px;letter-spacing:0.08px">Communauté Orange</div>
<svg style="left:429px;top:183px" width="10" height="10" viewBox="0 0 10 10"><g stroke="#eab35a" stroke-width="1.2"><path d="M5 0.5 V9.5 M0.5 5 H9.5 M1.8 1.8 L8.2 8.2 M8.2 1.8 L1.8 8.2"/></g><circle cx="5" cy="5" r="2.4" fill="#f4cf7c"/></svg>
<div class="a b14" style="left:445px;top:179px;color:#0a0a0a;font-size:14px">Re: En écoute en ce moment</div>
<svg style="left:24px;top:205px" width="13" height="13" viewBox="0 0 24 24"><path d="M12 1.5 L15 8.8 L22.8 9.5 L16.9 14.6 L18.7 22.3 L12 18.3 L5.3 22.3 L7.1 14.6 L1.2 9.5 L9 8.8 Z" fill="none" stroke="#d6d6d6" stroke-width="1.9"/></svg>
<div class="a b14" style="left:89px;top:204px;color:#0a0a0a;font-size:14px;letter-spacing:0.08px">Communauté Orange</div>
<svg style="left:429px;top:208px" width="10" height="10" viewBox="0 0 10 10"><g stroke="#eab35a" stroke-width="1.2"><path d="M5 0.5 V9.5 M0.5 5 H9.5 M1.8 1.8 L8.2 8.2 M8.2 1.8 L1.8 8.2"/></g><circle cx="5" cy="5" r="2.4" fill="#f4cf7c"/></svg>
<div class="a b14" style="left:445px;top:204px;color:#0a0a0a;font-size:14px">Re: Je cherche de l'aide xbox</div>
<svg style="left:24px;top:230px" width="13" height="13" viewBox="0 0 24 24"><path d="M12 1.5 L15 8.8 L22.8 9.5 L16.9 14.6 L18.7 22.3 L12 18.3 L5.3 22.3 L7.1 14.6 L1.2 9.5 L9 8.8 Z" fill="none" stroke="#d6d6d6" stroke-width="1.9"/></svg>
<div class="a b14" style="left:89px;top:229px;color:#0a0a0a;font-size:14px;letter-spacing:0.08px">Communauté Orange</div>
<svg style="left:429px;top:233px" width="10" height="10" viewBox="0 0 10 10"><g stroke="#eab35a" stroke-width="1.2"><path d="M5 0.5 V9.5 M0.5 5 H9.5 M1.8 1.8 L8.2 8.2 M8.2 1.8 L1.8 8.2"/></g><circle cx="5" cy="5" r="2.4" fill="#f4cf7c"/></svg>
<div class="a b14" style="left:445px;top:229px;color:#0a0a0a;font-size:14px">Re: Re : Avira Free Antivirus</div>
<svg style="left:24px;top:255px" width="13" height="13" viewBox="0 0 24 24"><path d="M12 1.5 L15 8.8 L22.8 9.5 L16.9 14.6 L18.7 22.3 L12 18.3 L5.3 22.3 L7.1 14.6 L1.2 9.5 L9 8.8 Z" fill="none" stroke="#d6d6d6" stroke-width="1.9"/></svg>
<div class="a b14" style="left:89px;top:254px;color:#0a0a0a;font-size:14px;letter-spacing:0.08px">Communauté Orange</div>
<svg style="left:429px;top:258px" width="10" height="10" viewBox="0 0 10 10"><g stroke="#eab35a" stroke-width="1.2"><path d="M5 0.5 V9.5 M0.5 5 H9.5 M1.8 1.8 L8.2 8.2 M8.2 1.8 L1.8 8.2"/></g><circle cx="5" cy="5" r="2.4" fill="#f4cf7c"/></svg>
<div class="a b14" style="left:445px;top:254px;color:#0a0a0a;font-size:14px">Vous avez reçu des compliments</div>
<svg style="left:24px;top:280px" width="13" height="13" viewBox="0 0 24 24"><path d="M12 1.5 L15 8.8 L22.8 9.5 L16.9 14.6 L18.7 22.3 L12 18.3 L5.3 22.3 L7.1 14.6 L1.2 9.5 L9 8.8 Z" fill="none" stroke="#d6d6d6" stroke-width="1.9"/></svg>
<div class="a b14" style="left:89px;top:279px;color:#0a0a0a;font-size:14px;letter-spacing:0.08px">Communauté Orange</div>
<svg style="left:429px;top:283px" width="10" height="10" viewBox="0 0 10 10"><g stroke="#eab35a" stroke-width="1.2"><path d="M5 0.5 V9.5 M0.5 5 H9.5 M1.8 1.8 L8.2 8.2 M8.2 1.8 L1.8 8.2"/></g><circle cx="5" cy="5" r="2.4" fill="#f4cf7c"/></svg>
<div class="a b14" style="left:445px;top:279px;color:#0a0a0a;font-size:14px">Re: Mail d'envoi en orange</div>
<svg style="left:24px;top:305px" width="13" height="13" viewBox="0 0 24 24"><path d="M12 1.5 L15 8.8 L22.8 9.5 L16.9 14.6 L18.7 22.3 L12 18.3 L5.3 22.3 L7.1 14.6 L1.2 9.5 L9 8.8 Z" fill="none" stroke="#d6d6d6" stroke-width="1.9"/></svg>
<div class="a b14" style="left:89px;top:304px;color:#0a0a0a;font-size:14px;letter-spacing:0.08px">Communauté Orange</div>
<svg style="left:429px;top:308px" width="10" height="10" viewBox="0 0 10 10"><g stroke="#eab35a" stroke-width="1.2"><path d="M5 0.5 V9.5 M0.5 5 H9.5 M1.8 1.8 L8.2 8.2 M8.2 1.8 L1.8 8.2"/></g><circle cx="5" cy="5" r="2.4" fill="#f4cf7c"/></svg>
<div class="a b14" style="left:445px;top:304px;color:#0a0a0a;font-size:14px">Re: Le mystère de Teddy : </div>
<svg style="left:24px;top:330px" width="13" height="13" viewBox="0 0 24 24"><path d="M12 1.5 L15 8.8 L22.8 9.5 L16.9 14.6 L18.7 22.3 L12 18.3 L5.3 22.3 L7.1 14.6 L1.2 9.5 L9 8.8 Z" fill="none" stroke="#d6d6d6" stroke-width="1.9"/></svg>
<div class="a b14" style="left:89px;top:329px;color:#0a0a0a;font-size:14px;letter-spacing:0.08px">Communauté Orange</div>
<svg style="left:429px;top:333px" width="10" height="10" viewBox="0 0 10 10"><g stroke="#eab35a" stroke-width="1.2"><path d="M5 0.5 V9.5 M0.5 5 H9.5 M1.8 1.8 L8.2 8.2 M8.2 1.8 L1.8 8.2"/></g><circle cx="5" cy="5" r="2.4" fill="#f4cf7c"/></svg>
<div class="a b14" style="left:445px;top:329px;color:#0a0a0a;font-size:14px">Re: Changement du mot de</div>
<svg style="left:24px;top:355px" width="13" height="13" viewBox="0 0 24 24"><path d="M12 1.5 L15 8.8 L22.8 9.5 L16.9 14.6 L18.7 22.3 L12 18.3 L5.3 22.3 L7.1 14.6 L1.2 9.5 L9 8.8 Z" fill="none" stroke="#d6d6d6" stroke-width="1.9"/></svg>
<div class="a b14" style="left:89px;top:354px;color:#0a0a0a;font-size:14px;letter-spacing:0.08px">Communauté Orange</div>
<svg style="left:429px;top:358px" width="10" height="10" viewBox="0 0 10 10"><g stroke="#eab35a" stroke-width="1.2"><path d="M5 0.5 V9.5 M0.5 5 H9.5 M1.8 1.8 L8.2 8.2 M8.2 1.8 L1.8 8.2"/></g><circle cx="5" cy="5" r="2.4" fill="#f4cf7c"/></svg>
<div class="a b14" style="left:445px;top:354px;color:#0a0a0a;font-size:14px">Re: vider ma corbeille des</div>
<svg style="left:24px;top:380px" width="13" height="13" viewBox="0 0 24 24"><path d="M12 1.5 L15 8.8 L22.8 9.5 L16.9 14.6 L18.7 22.3 L12 18.3 L5.3 22.3 L7.1 14.6 L1.2 9.5 L9 8.8 Z" fill="none" stroke="#d6d6d6" stroke-width="1.9"/></svg>
<div class="a b14" style="left:89px;top:379px;color:#0a0a0a;font-size:14px;letter-spacing:0.08px">Communauté Orange</div>
<svg style="left:429px;top:383px" width="10" height="10" viewBox="0 0 10 10"><g stroke="#eab35a" stroke-width="1.2"><path d="M5 0.5 V9.5 M0.5 5 H9.5 M1.8 1.8 L8.2 8.2 M8.2 1.8 L1.8 8.2"/></g><circle cx="5" cy="5" r="2.4" fill="#f4cf7c"/></svg>
<div class="a b14" style="left:445px;top:379px;color:#0a0a0a;font-size:14px">Vous avez reçu des compliments</div>
<svg style="left:24px;top:405px" width="13" height="13" viewBox="0 0 24 24"><path d="M12 1.5 L15 8.8 L22.8 9.5 L16.9 14.6 L18.7 22.3 L12 18.3 L5.3 22.3 L7.1 14.6 L1.2 9.5 L9 8.8 Z" fill="none" stroke="#d6d6d6" stroke-width="1.9"/></svg>
<div class="a b14" style="left:89px;top:404px;color:#0a0a0a;font-size:14px;letter-spacing:0.08px">Communauté Orange</div>
<svg style="left:429px;top:408px" width="10" height="10" viewBox="0 0 10 10"><g stroke="#eab35a" stroke-width="1.2"><path d="M5 0.5 V9.5 M0.5 5 H9.5 M1.8 1.8 L8.2 8.2 M8.2 1.8 L1.8 8.2"/></g><circle cx="5" cy="5" r="2.4" fill="#f4cf7c"/></svg>
<div class="a b14" style="left:445px;top:404px;color:#0a0a0a;font-size:14px">Re: Changement du mot de</div>
<svg style="left:24px;top:430px" width="13" height="13" viewBox="0 0 24 24"><path d="M12 1.5 L15 8.8 L22.8 9.5 L16.9 14.6 L18.7 22.3 L12 18.3 L5.3 22.3 L7.1 14.6 L1.2 9.5 L9 8.8 Z" fill="none" stroke="#d6d6d6" stroke-width="1.9"/></svg>
<div class="a b14" style="left:89px;top:429px;color:#0a0a0a;font-size:14px;letter-spacing:0.08px">Communauté Orange</div>
<svg style="left:429px;top:433px" width="10" height="10" viewBox="0 0 10 10"><g stroke="#eab35a" stroke-width="1.2"><path d="M5 0.5 V9.5 M0.5 5 H9.5 M1.8 1.8 L8.2 8.2 M8.2 1.8 L1.8 8.2"/></g><circle cx="5" cy="5" r="2.4" fill="#f4cf7c"/></svg>
<div class="a b14" style="left:445px;top:429px;color:#0a0a0a;font-size:14px">Re: Changement du mot de</div>
<div class="r" style="left:0;top:450px;width:621px;height:25px;background:#e5f3fe"></div>
<svg style="left:24px;top:455px" width="13" height="13" viewBox="0 0 24 24"><path d="M12 1.5 L15 8.8 L22.8 9.5 L16.9 14.6 L18.7 22.3 L12 18.3 L5.3 22.3 L7.1 14.6 L1.2 9.5 L9 8.8 Z" fill="none" stroke="#d6d6d6" stroke-width="1.9"/></svg>
<div class="a b14" style="left:89px;top:454px;color:#0a0a0a;font-size:14px;letter-spacing:0.08px">Communauté Orange</div>
<svg style="left:429px;top:458px" width="10" height="10" viewBox="0 0 10 10"><g stroke="#eab35a" stroke-width="1.2"><path d="M5 0.5 V9.5 M0.5 5 H9.5 M1.8 1.8 L8.2 8.2 M8.2 1.8 L1.8 8.2"/></g><circle cx="5" cy="5" r="2.4" fill="#f4cf7c"/></svg>
<div class="a b14" style="left:445px;top:454px;color:#0a0a0a;font-size:14px">Re: problème messagerie </div>
<svg style="left:24px;top:480px" width="13" height="13" viewBox="0 0 24 24"><path d="M12 1.5 L15 8.8 L22.8 9.5 L16.9 14.6 L18.7 22.3 L12 18.3 L5.3 22.3 L7.1 14.6 L1.2 9.5 L9 8.8 Z" fill="none" stroke="#d6d6d6" stroke-width="1.9"/></svg>
<div class="a b14" style="left:89px;top:479px;color:#0a0a0a;font-size:14px;letter-spacing:0.08px">Communauté Orange</div>
<svg style="left:429px;top:483px" width="10" height="10" viewBox="0 0 10 10"><g stroke="#eab35a" stroke-width="1.2"><path d="M5 0.5 V9.5 M0.5 5 H9.5 M1.8 1.8 L8.2 8.2 M8.2 1.8 L1.8 8.2"/></g><circle cx="5" cy="5" r="2.4" fill="#f4cf7c"/></svg>
<div class="a b14" style="left:445px;top:479px;color:#0a0a0a;font-size:14px">Re: latence sur les jeux blizzard</div>
<svg style="left:24px;top:505px" width="13" height="13" viewBox="0 0 24 24"><path d="M12 1.5 L15 8.8 L22.8 9.5 L16.9 14.6 L18.7 22.3 L12 18.3 L5.3 22.3 L7.1 14.6 L1.2 9.5 L9 8.8 Z" fill="none" stroke="#d6d6d6" stroke-width="1.9"/></svg>
<div class="a b14" style="left:89px;top:504px;color:#0a0a0a;font-size:14px;letter-spacing:0.08px">Communauté Orange</div>
<svg style="left:429px;top:508px" width="10" height="10" viewBox="0 0 10 10"><g stroke="#eab35a" stroke-width="1.2"><path d="M5 0.5 V9.5 M0.5 5 H9.5 M1.8 1.8 L8.2 8.2 M8.2 1.8 L1.8 8.2"/></g><circle cx="5" cy="5" r="2.4" fill="#f4cf7c"/></svg>
<div class="a b14" style="left:445px;top:504px;color:#0a0a0a;font-size:14px">Re: En écoute en ce moment</div>
<svg style="left:24px;top:530px" width="13" height="13" viewBox="0 0 24 24"><path d="M12 1.5 L15 8.8 L22.8 9.5 L16.9 14.6 L18.7 22.3 L12 18.3 L5.3 22.3 L7.1 14.6 L1.2 9.5 L9 8.8 Z" fill="none" stroke="#d6d6d6" stroke-width="1.9"/></svg>
<div class="a b14" style="left:89px;top:529px;color:#0a0a0a;font-size:14px;letter-spacing:0.08px">Communauté Orange</div>
<div class="a b14" style="left:445px;top:529px;color:#0a0a0a;font-size:14px"><span style="letter-spacing:0.45px">**********</span>@orange.fr (Communauté Orange)</div>
<svg style="left:24px;top:555px" width="13" height="13" viewBox="0 0 24 24"><path d="M12 1.5 L15 8.8 L22.8 9.5 L16.9 14.6 L18.7 22.3 L12 18.3 L5.3 22.3 L7.1 14.6 L1.2 9.5 L9 8.8 Z" fill="none" stroke="#d6d6d6" stroke-width="1.9"/></svg>
<div class="a b14" style="left:89px;top:554px;color:#0a0a0a;font-size:14px;letter-spacing:0.08px">Communauté Orange</div>
<svg style="left:429px;top:558px" width="10" height="10" viewBox="0 0 10 10"><g stroke="#eab35a" stroke-width="1.2"><path d="M5 0.5 V9.5 M0.5 5 H9.5 M1.8 1.8 L8.2 8.2 M8.2 1.8 L1.8 8.2"/></g><circle cx="5" cy="5" r="2.4" fill="#f4cf7c"/></svg>
<div class="a b14" style="left:445px;top:554px;color:#0a0a0a;font-size:14px">Re: En écoute en ce moment</div>
<svg style="left:24px;top:580px" width="13" height="13" viewBox="0 0 24 24"><path d="M12 1.5 L15 8.8 L22.8 9.5 L16.9 14.6 L18.7 22.3 L12 18.3 L5.3 22.3 L7.1 14.6 L1.2 9.5 L9 8.8 Z" fill="none" stroke="#d6d6d6" stroke-width="1.9"/></svg>
<div class="a b14" style="left:89px;top:579px;color:#0a0a0a;font-size:14px;letter-spacing:0.08px">Communauté Orange</div>
<div class="a b14" style="left:445px;top:579px;color:#0a0a0a;font-size:14px">Re: En écoute en ce moment</div>
<svg style="left:24px;top:605px" width="13" height="13" viewBox="0 0 24 24"><path d="M12 1.5 L15 8.8 L22.8 9.5 L16.9 14.6 L18.7 22.3 L12 18.3 L5.3 22.3 L7.1 14.6 L1.2 9.5 L9 8.8 Z" fill="none" stroke="#d6d6d6" stroke-width="1.9"/></svg>
<div class="a b14" style="left:89px;top:604px;color:#0a0a0a;font-size:14px;letter-spacing:0.08px">Communauté Orange</div>
<div class="a b14" style="left:445px;top:604px;color:#0a0a0a;font-size:14px">Re: transferer mes dossiers</div>
<svg style="left:24px;top:630px" width="13" height="13" viewBox="0 0 24 24"><path d="M12 1.5 L15 8.8 L22.8 9.5 L16.9 14.6 L18.7 22.3 L12 18.3 L5.3 22.3 L7.1 14.6 L1.2 9.5 L9 8.8 Z" fill="none" stroke="#d6d6d6" stroke-width="1.9"/></svg>
<div class="a b14" style="left:89px;top:629px;color:#0a0a0a;font-size:14px;letter-spacing:0.08px">Communauté Orange</div>
<svg style="left:429px;top:633px" width="10" height="10" viewBox="0 0 10 10"><g stroke="#eab35a" stroke-width="1.2"><path d="M5 0.5 V9.5 M0.5 5 H9.5 M1.8 1.8 L8.2 8.2 M8.2 1.8 L1.8 8.2"/></g><circle cx="5" cy="5" r="2.4" fill="#f4cf7c"/></svg>
<div class="a b14" style="left:445px;top:629px;color:#0a0a0a;font-size:14px">Re: En écoute en ce moment</div>
<svg style="left:24px;top:655px" width="13" height="13" viewBox="0 0 24 24"><path d="M12 1.5 L15 8.8 L22.8 9.5 L16.9 14.6 L18.7 22.3 L12 18.3 L5.3 22.3 L7.1 14.6 L1.2 9.5 L9 8.8 Z" fill="none" stroke="#d6d6d6" stroke-width="1.9"/></svg>
<div class="a b14" style="left:89px;top:654px;color:#0a0a0a;font-size:14px;letter-spacing:0.08px">Communauté Orange</div>
<div class="a b14" style="left:445px;top:654px;color:#0a0a0a;font-size:14px">Re: En écoute en ce moment</div>
</div>
<svg style="left:16px;top:840px" width="20" height="19" viewBox="0 0 20 19"><rect x="1" y="1" width="10.4" height="7.8" fill="#1212c0"/><rect x="2.5" y="2.5" width="6" height="4" fill="#2a3af0"/><rect x="2" y="10" width="7" height="2.5" fill="#9c9c9c"/><rect x="6.8" y="4.2" width="11.6" height="9" fill="#dde2ff"/><rect x="7.6" y="5" width="10.2" height="7.6" fill="#1414d0"/><rect x="9" y="6.5" width="6.5" height="4" fill="#3040ff"/><rect x="9" y="13.5" width="7" height="1.5" fill="#b0b0b0"/><rect x="8.5" y="15" width="8" height="2" fill="#7a7a7a"/></svg>
<div class="a" style="left:52px;top:843px;font-size:13.7px;line-height:16px;color:#111">phildur&nbsp; : Téléchargement du message 316 sur 506…</div>
</body></html>
